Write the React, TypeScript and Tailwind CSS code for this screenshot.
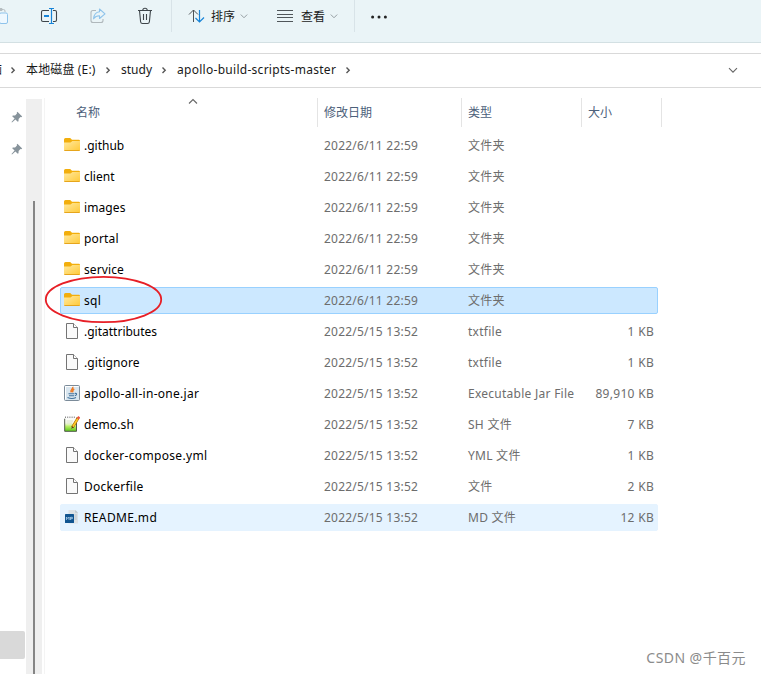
import { useState } from "react";
import clsx from "clsx";

type TipoIcone = "folder" | "page" | "jar" | "sh" | "md";

interface IArquivo {
  nome: string;
  data: string;
  tipo: string;
  tamanho?: string;
  icone: TipoIcone;
  espaco?: string;
}

const PASTA = "2022/6/11 22:59";
const ARQUIVO = "2022/5/15 13:52";

const arquivos: IArquivo[] = [
  { nome: ".github", data: PASTA, tipo: "文件夹", icone: "folder" },
  { nome: "client", data: PASTA, tipo: "文件夹", icone: "folder" },
  { nome: "images", data: PASTA, tipo: "文件夹", icone: "folder", espaco: "tracking-[0.1px]" },
  { nome: "portal", data: PASTA, tipo: "文件夹", icone: "folder", espaco: "tracking-[0.15px]" },
  { nome: "service", data: PASTA, tipo: "文件夹", icone: "folder", espaco: "tracking-[0.1px]" },
  { nome: "sql", data: PASTA, tipo: "文件夹", icone: "folder", espaco: "tracking-[0.3px]" },
  { nome: ".gitattributes", data: ARQUIVO, tipo: "txtfile", tamanho: "1 KB", icone: "page" },
  { nome: ".gitignore", data: ARQUIVO, tipo: "txtfile", tamanho: "1 KB", icone: "page", espaco: "tracking-[0.1px]" },
  { nome: "apollo-all-in-one.jar", data: ARQUIVO, tipo: "Executable Jar File", tamanho: "89,910 KB", icone: "jar", espaco: "tracking-[0.28px]" },
  { nome: "demo.sh", data: ARQUIVO, tipo: "SH 文件", tamanho: "7 KB", icone: "sh", espaco: "tracking-[0.15px]" },
  { nome: "docker-compose.yml", data: ARQUIVO, tipo: "YML 文件", tamanho: "1 KB", icone: "page", espaco: "tracking-[0.33px]" },
  { nome: "Dockerfile", data: ARQUIVO, tipo: "文件", tamanho: "2 KB", icone: "page", espaco: "tracking-[0.25px]" },
  { nome: "README.md", data: ARQUIVO, tipo: "MD 文件", tamanho: "12 KB", icone: "md", espaco: "tracking-[0.36px]" },
];

function Chevron({ className, d }: { className?: string; d: string }) {
  return (
    <svg width="10" height="10" viewBox="0 0 10 10" fill="none" stroke="currentColor" strokeWidth="1.1" className={clsx("shrink-0", className)}>
      <path d={d} />
    </svg>
  );
}

function Separador({ className }: { className?: string }) {
  return (
    <svg width="10" height="10" viewBox="0 0 10 10" fill="none" stroke="#555" strokeWidth="1.4" className={clsx("shrink-0", className)}>
      <path d="M3.5 2.5 6.2 5.2 3.5 7.9" />
    </svg>
  );
}

const BAIXO = "M1 3.2 5 7.2 9 3.2";

function IconeArquivo({ icone }: { icone: TipoIcone }) {
  switch (icone) {
    case "folder":
      return (
        <svg width="16" height="16" viewBox="0 0 16 16" className="-mt-px">
          <defs>
            <linearGradient id="pasta" x1="0" y1="0" x2="1" y2="1">
              <stop offset="0" stopColor="#ffe9a0" />
              <stop offset="1" stopColor="#ffc937" />
            </linearGradient>
          </defs>
          <path d="M0 2.5Q0 1 1.5 1H6.2L8 2.8H14.8Q16 2.8 16 4V8H0Z" fill="#f2ae0c" />
          <path d="M0 5.6H6.5L8.4 4H16V13Q16 14 15 14H1Q0 14 0 13Z" fill="url(#pasta)" />
          <path d="M.4 13.5H15.6" stroke="#e6a51c" />
        </svg>
      );
    case "page":
      return (
        <svg width="16" height="16" viewBox="0 0 16 16" className="-mt-px">
          <path d="M2.5.5H9.5L13.5 4.5V15.5H2.5Z" fill="#fafafa" stroke="#747474" />
          <path d="M9.5.5V4.5H13.5" fill="#fff" stroke="#747474" />
        </svg>
      );
    case "jar":
      return (
        <svg width="16" height="16" viewBox="0 0 16 16" fill="none" className="-mt-px">
          <rect x=".5" y=".5" width="15" height="15" rx="1" fill="#d9e6ef" stroke="#7b8b99" />
          <path d="M1.5 14.5V1.5H14.5" stroke="#fff" />
          <path d="M8.8 1.8C9.5 4 5.8 4.3 7.4 7.4M10.2 3.8C8.3 5 8.3 5.7 8.8 7.4" stroke="#ef7a24" strokeWidth="1.4" />
          <path d="M4.5 8.8H10.5M5 10.7H10M11 8.4C13.3 8 13 10.2 10.8 10.7M3.5 12.5C6 13.5 10 13.5 12 12.4" stroke="#41729c" strokeWidth="1.1" />
        </svg>
      );
    case "sh":
      return (
        <svg width="16" height="16" viewBox="0 0 16 16" fill="none" className="-mt-px">
          <defs>
            <linearGradient id="bloco" x1="0" y1="0" x2="0" y2="1">
              <stop offset="0" stopColor="#fff" />
              <stop offset=".4" stopColor="#f6fbe8" />
              <stop offset=".65" stopColor="#b5ec62" />
              <stop offset="1" stopColor="#58c916" />
            </linearGradient>
          </defs>
          <path d="M.7 1.6H12.5V15.3H.7Z" fill="url(#bloco)" stroke="#50594b" />
          <path d="M0 1.5H12.5" stroke="#fff" strokeWidth="2.4" />
          <path d="M1 1.3H12" stroke="#888" strokeWidth="1.6" strokeDasharray="1 1.2" />
          <path d="M2.5 5H9M2.5 7H8" stroke="#cbd4bd" strokeWidth=".7" />
          <path d="M14.3 1.8 8.3 11.5" stroke="#a26300" strokeWidth="2.8" />
          <path d="M14.2 2 8.8 10.7" stroke="#ffc928" strokeWidth="1.7" />
          <path d="M15.2.7 13.8 2.8" stroke="#ed5645" strokeWidth="2.4" />
          <path d="M8.2 10.2 7.2 13 9.6 11.2Z" fill="#4a3a20" />
        </svg>
      );
    case "md":
      return (
        <svg width="16" height="16" viewBox="0 0 16 16" className="-mt-px">
          <path d="M4.5 1H11.2L14 3.8V14.5H4.5Z" fill="#dde2e5" />
          <path d="M11.2 1V3.8H14Z" fill="#bcc5cb" />
          <path d="M10.5 6H12.8M10.5 8H12.8M10.5 10H12.8" stroke="#b8c1c7" />
          <rect x="1" y="5" width="9" height="9" rx=".6" fill="#0f5490" />
          <path d="M2.4 11V8L3.8 9.5 5.1 8V11M6.6 8V11M6.6 8.3H8.4V9.7H6.6" fill="none" stroke="#b7d6ed" strokeWidth=".8" />
        </svg>
      );
  }
}

function Pino() {
  return (
    <svg width="12" height="12" viewBox="0 0 12 12" fill="#87939b">
      <path d="M6.4.8 11.2 5.6 10.2 6.3 9.4 6 7.6 7.9 7.5 10.2 6.8 10.8 4.4 8.4 1 11.4.5 11 3.6 7.6 1.2 5.2 1.8 4.5 4.1 4.4 6 2.6 5.7 1.7Z" />
    </svg>
  );
}

function BarraFerramentas() {
  return (
    <div className="flex h-[43px] shrink-0 items-start border-b border-[#d3e0e3] bg-[#eaf4f7] text-[#1a1a1a]">
      <div className="flex h-8 w-[171px] shrink-0 items-center">
        <svg width="9" height="18" viewBox="0 0 9 18" fill="none" className="shrink-0">
          <path d="M0 2.5H3.5Q5 2.5 5 4V5M0 1.5H2V3.5H0" stroke="#b6bec2" />
          <rect x="-.5" y="6" width="8" height="10.5" rx="1.5" fill="#eef8ff" stroke="#8ec3eb" />
        </svg>
        <svg width="18" height="18" viewBox="0 0 18 18" fill="none" className="ml-[31px] shrink-0">
          <path d="M9 3.5H3Q1.5 3.5 1.5 5V13Q1.5 14.5 3 14.5H9M13 3.5H15Q16.5 3.5 16.5 5V13Q16.5 14.5 15 14.5H13" stroke="#3e454a" strokeWidth="1.1" />
          <path d="M11.5 1.5V16.5M9 1.5H14M9 16.5H14" stroke="#1683d8" strokeWidth="1.2" />
          <path d="M4 9H9" stroke="#1683d8" strokeWidth="2" />
        </svg>
        <svg width="16" height="18" viewBox="0 0 16 18" fill="none" className="ml-8 shrink-0">
          <path d="M6 3.5H3Q1 3.5 1 5.5V13.5Q1 15.5 3 15.5H11Q13 15.5 13 13.5V12" stroke="#b0b8bc" strokeWidth="1.1" />
          <path d="M9.5 2 15 6.8 9.5 11.5V8.8C6.5 8.7 5 9.8 3.6 11.8C4 7.5 6.2 5.1 9.5 4.8Z" stroke="#8ec3eb" strokeWidth="1.1" strokeLinejoin="round" />
        </svg>
        <svg width="16" height="18" viewBox="0 0 16 18" fill="none" stroke="#3e454a" className="ml-[31px] shrink-0">
          <path d="M1 3.5H15M5.8 3.3C5.8 .6 10.2 .6 10.2 3.3M2.5 3.5 3.6 14.8Q3.8 16.5 5.5 16.5H10.5Q12.2 16.5 12.4 14.8L13.5 3.5M6.5 7V13M9.5 7V13" strokeWidth="1.1" />
        </svg>
      </div>
      <div className="flex h-8 w-[184px] shrink-0 items-center border-x border-[#d8e3e8] pl-4">
        <svg width="17" height="14" viewBox="0 0 17 14" fill="none" className="shrink-0">
          <path d="M5.5 13V1M1 5.5 5.5 1 10 5.5" stroke="#4d5357" />
          <path d="M11.5 1V13M7.5 9 11.5 13 16 8.5" stroke="#1683d8" strokeWidth="1.2" />
        </svg>
        <span className="ml-1.5 pt-0.5">排序</span>
        <Chevron d={BAIXO} className="ml-[5px] h-2 w-2 text-[#8a9297]" />
        <svg width="16" height="12" viewBox="0 0 16 12" stroke="#50565a" className="ml-[29px] shrink-0">
          <path d="M0 .5H16M0 4.5H16M0 7.5H16M0 11.5H16" />
        </svg>
        <span className="ml-2 pt-0.5">查看</span>
        <Chevron d={BAIXO} className="ml-[5px] h-2 w-2 text-[#8a9297]" />
      </div>
      <svg width="18" height="4" viewBox="0 0 18 4" fill="#222" className="mt-[15px] ml-[15px]">
        <circle cx="2.6" cy="2" r="1.5" />
        <circle cx="9" cy="2" r="1.5" />
        <circle cx="15.4" cy="2" r="1.5" />
      </svg>
    </div>
  );
}

function BarraEndereco() {
  return (
    <div className="mt-2.5 flex h-[35px] shrink-0 items-center border-y border-[#d9d9d9] pb-px whitespace-nowrap text-[#191919]">
      <span className="flex w-0.5 shrink-0 justify-end overflow-hidden">脑</span>
      <Separador className="ml-1.5" />
      <span className="ml-2 w-[70px] tracking-[0.15px]">本地磁盘 (E:)</span>
      <Separador className="ml-[7px]" />
      <span className="ml-2 w-[33px]">study</span>
      <Separador className="ml-[5px]" />
      <span className="ml-2 w-40 tracking-[0.28px]">apollo-build-scripts-master</span>
      <Separador className="ml-1.5" />
      <Chevron d={BAIXO} className="mr-[23px] ml-auto text-[#666]" />
    </div>
  );
}

export default function App() {
  const [selecionado, setSelecionado] = useState("sql");

  return (
    <div className="relative flex h-[674px] w-[761px] flex-col overflow-hidden bg-white font-['Noto_Sans','Noto_Sans_CJK_SC',sans-serif] text-[12px] leading-4">
      <BarraFerramentas />
      <BarraEndereco />
      <div className="flex min-h-0 flex-1 pt-2.5">
        {/* Painel lateral */}
        <div className="flex w-[26px] shrink-0 flex-col pt-[13px] pb-[15px]">
          <div className="ml-[11px] flex flex-col gap-5">
            <Pino />
            <Pino />
          </div>
          <div className="mt-auto h-7 w-[25px] rounded-r-[2px] bg-[#d9d9d9]" />
        </div>
        <div className="mt-px flex w-4 shrink-0 justify-center bg-[#efefef] pt-[102px]">
          <div className="w-0.5 bg-[#858585]" />
        </div>
        <div className="ml-0.5 w-px shrink-0 bg-[#f4f4f4]" />

        {/* Lista de arquivos */}
        <div className="ml-[15px] w-[602px]">
          <div className="flex h-[29px] items-center text-[#4c607a]">
            <div className="relative w-[257px] pl-4">
              名称
              <Chevron d="M1 6.5 5 2.5 9 6.5" className="absolute -top-2 left-[128px] text-[#666]" />
            </div>
            <div className="flex h-full w-36 items-center border-l border-[#e4e4e4] pl-1.5">修改日期</div>
            <div className="flex h-full w-[120px] items-center border-l border-[#e4e4e4] pl-1.5">类型</div>
            <div className="flex h-full w-[81px] items-center border-x border-[#e4e4e4] pl-1.5">大小</div>
          </div>
          <div className="mt-[5px] flex w-[598px] flex-col gap-1">
            {arquivos.map((arq) => (
              <div
                key={arq.nome}
                onClick={() => setSelecionado(arq.nome)}
                className={clsx(
                  "relative flex h-[27px] items-center rounded-[2px] border pr-[3px] pl-[3px] whitespace-nowrap text-[#6d6d6d]",
                  arq.nome === selecionado
                    ? "border-[#99d1ff] bg-[#cce8ff]"
                    : arq.icone === "md"
                      ? "border-[#e5f3ff] bg-[#e5f3ff]"
                      : "border-transparent"
                )}
              >
                <IconeArquivo icone={arq.icone} />
                <span className={clsx("ml-1 w-60 text-black", arq.espaco)}>{arq.nome}</span>
                <span className="w-36 tracking-[0.22px]">{arq.data}</span>
                <span className="w-[110px] tracking-[0.26px]">{arq.tipo}</span>
                <span className="ml-auto tracking-[0.3px]">{arq.tamanho}</span>
                {arq.nome === "sql" && (
                  <svg width="120" height="50" viewBox="0 0 120 50" fill="none" className="absolute -top-[13px] -left-[18px]">
                    <ellipse cx="60.5" cy="24.5" rx="57.7" ry="22.7" stroke="#e71f26" strokeWidth="1.8" />
                  </svg>
                )}
              </div>
            ))}
          </div>
        </div>
      </div>
      <div className="absolute right-[15px] bottom-1.5 text-[14px] leading-5 tracking-[0.45px] text-[#8b8b8b]">CSDN @千百元</div>
    </div>
  );
}
